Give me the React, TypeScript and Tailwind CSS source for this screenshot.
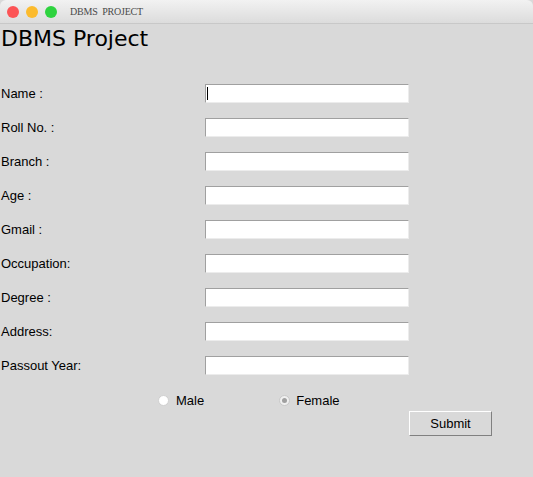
const fields = [
  'Name :',
  'Roll No. :',
  'Branch :',
  'Age :',
  'Gmail :',
  'Occupation:',
  'Degree :',
  'Address:',
  'Passout Year:',
]

function Field({ label, focused }: { label: string; focused?: boolean }) {
  return (
    <div className="flex items-center h-[19px]">
      <span className="w-[205px] pl-[1px] text-[13px] text-black leading-none">{label}</span>
      <div className="w-[204px] h-[19px] bg-white border border-t-[#a0a0a0] border-l-[#a0a0a0] border-b-[#ececec] border-r-[#ececec] flex items-center">
        {focused && <div className="ml-[1px] w-[1px] h-[13px] bg-black" />}
      </div>
    </div>
  )
}

export default function App() {
  return (
    <div className="w-[533px] h-[477px] bg-[#d9d9d9] flex flex-col font-['Liberation_Sans',Arial,sans-serif]">
      <div className="h-[24px] shrink-0 rounded-t-[6px] bg-gradient-to-b from-[#f2f2f2] to-[#dcdcdc] border-b border-[#c8c8c8] flex items-center pl-[7px]">
        <div className="flex items-center gap-[7px]">
          <div className="w-[12px] h-[12px] rounded-full bg-[#fc5456]" />
          <div className="w-[12px] h-[12px] rounded-full bg-[#fcbb2d]" />
          <div className="w-[12px] h-[12px] rounded-full bg-[#2ed33f]" />
        </div>
        <span className="ml-[13px] text-[10px] text-[#4a4a4a] font-['Liberation_Serif',serif] tracking-[-0.2px]">
          DBMS&nbsp; PROJECT
        </span>
      </div>

      <div className="h-[60px] shrink-0 pt-[2px] pl-[1px]">
        <h1 className="text-[22px] leading-[26px] text-black font-['DejaVu_Sans',sans-serif]">DBMS Project</h1>
      </div>

      <div className="flex flex-col gap-[15px]">
        {fields.map((f, i) => (
          <Field key={f} label={f} focused={i === 0} />
        ))}
      </div>

      <div className="mt-[17px] h-[17px] flex items-center text-[13px] text-black">
        <div className="ml-[158px] flex items-center gap-[7px]">
          <div className="w-[11px] h-[11px] rounded-full bg-white border border-[#d0d0d0]" />
          <span>Male</span>
        </div>
        <div className="ml-[75px] flex items-center gap-[6px]">
          <div className="w-[11px] h-[11px] rounded-full bg-[#f0f0f0] border border-[#c8c8c8] flex items-center justify-center">
            <div className="w-[5px] h-[5px] rounded-full bg-[#a0a0a0]" />
          </div>
          <span>Female</span>
        </div>
      </div>

      <div className="mt-[2px] pl-[409px]">
        <button className="w-[83px] h-[25px] bg-[#d9d9d9] border border-t-white border-l-white border-b-[#808080] border-r-[#808080] text-[13px] text-black">
          Submit
        </button>
      </div>
    </div>
  )
}
